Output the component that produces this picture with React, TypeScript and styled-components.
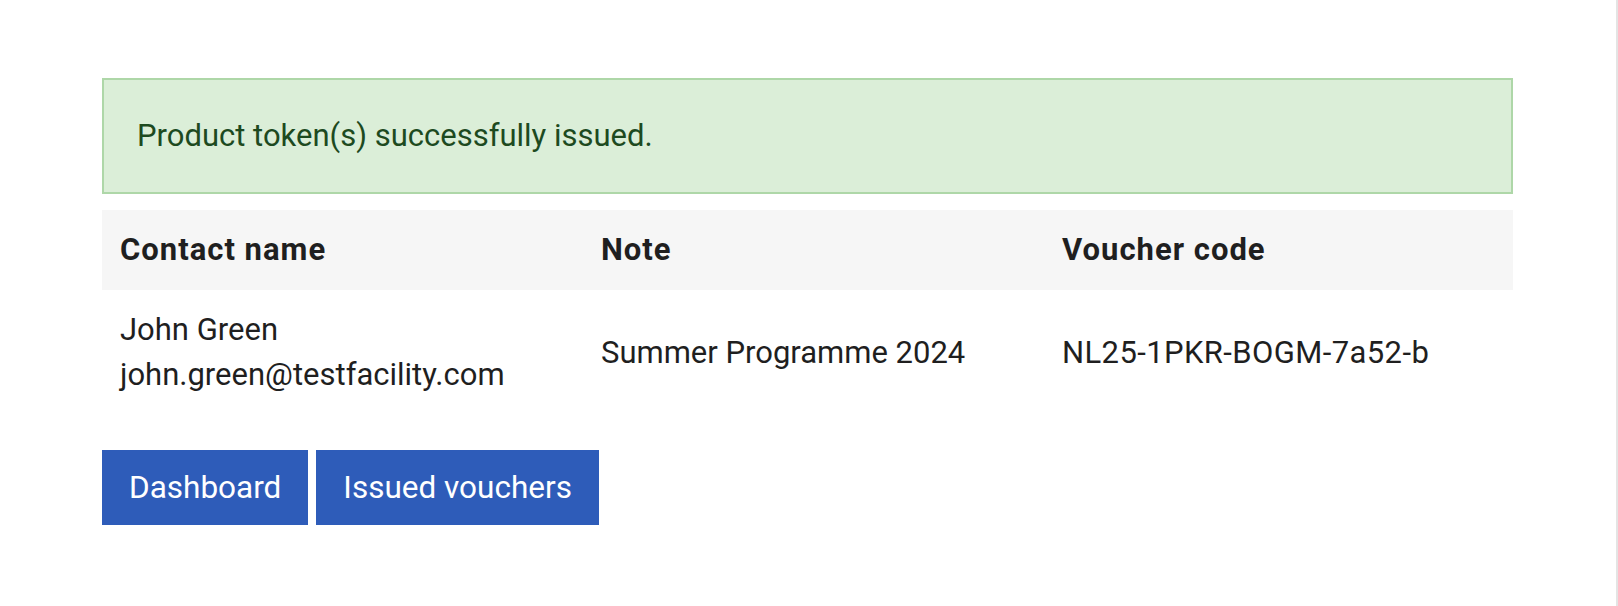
import styled, { createGlobalStyle } from 'styled-components';

const GlobalStyle = createGlobalStyle`
    html, body {
        margin: 0;
        padding: 0;
        background: #ffffff;
    }

    body {
        font-family: Roboto, "Liberation Sans", Arial, sans-serif;
        color: #1f1f1f;
    }
`

const Page = styled.div`
    min-height: 606px;
    box-sizing: border-box;
    padding: 78px 103px 0 102px;
    border-right: 2px solid #e4e4e4;
`

const Alert = styled.div`
    border: 2px solid #aed7a8;
    background-color: #dbeed8;
    color: #1d4a1f;
    padding: 33px 33px;
    font-size: 31px;
    line-height: 46px;
`

const Table = styled.div`
    margin-top: 16px;
    display: grid;
    grid-template-columns: 481px 461px 1fr;
`

const HeadCell = styled.div`
    background-color: #f6f6f6;
    padding: 17px 18px;
    font-size: 31px;
    line-height: 46px;
    font-weight: 700;
    letter-spacing: 1px;
    color: #1f1f1f;
`

const Cell = styled.div`
    display: flex;
    flex-direction: column;
    justify-content: center;
    padding: 17px 18px;
    font-size: 31px;
    line-height: 45px;
    color: #1f1f1f;
`

const CodeCell = styled(Cell)`
    letter-spacing: 0.4px;
`

const Actions = styled.div`
    display: flex;
    gap: 8px;
    margin-top: 36px;
`

const Button = styled.a`
    display: inline-block;
    background-color: #2e5cb9;
    color: #ffffff;
    padding: 15px 27px;
    font-size: 31.5px;
    line-height: 45px;
    text-decoration: none;
    cursor: pointer;

    &:hover {
        background-color: #244b9a;
    }
`

interface IssuedToken {
    name: string;
    email: string;
    note: string;
    code: string;
}

const tokens: IssuedToken[] = [
    {
        name: 'John Green',
        email: 'john.green@testfacility.com',
        note: 'Summer Programme 2024',
        code: 'NL25-1PKR-BOGM-7a52-b',
    },
]

export default function App() {
    return (
        <>
            <GlobalStyle />
            <Page>
                <Alert>Product token(s) successfully issued.</Alert>
                <Table>
                    <HeadCell>Contact name</HeadCell>
                    <HeadCell>Note</HeadCell>
                    <HeadCell>Voucher code</HeadCell>
                    {tokens.map((token) => (
                        <>
                            <Cell key={token.code + '-name'}>
                                <span>{token.name}</span>
                                <span>{token.email}</span>
                            </Cell>
                            <Cell key={token.code + '-note'}>{token.note}</Cell>
                            <CodeCell key={token.code + '-code'}>{token.code}</CodeCell>
                        </>
                    ))}
                </Table>
                <Actions>
                    <Button href="#">Dashboard</Button>
                    <Button href="#">Issued vouchers</Button>
                </Actions>
            </Page>
        </>
    )
}
